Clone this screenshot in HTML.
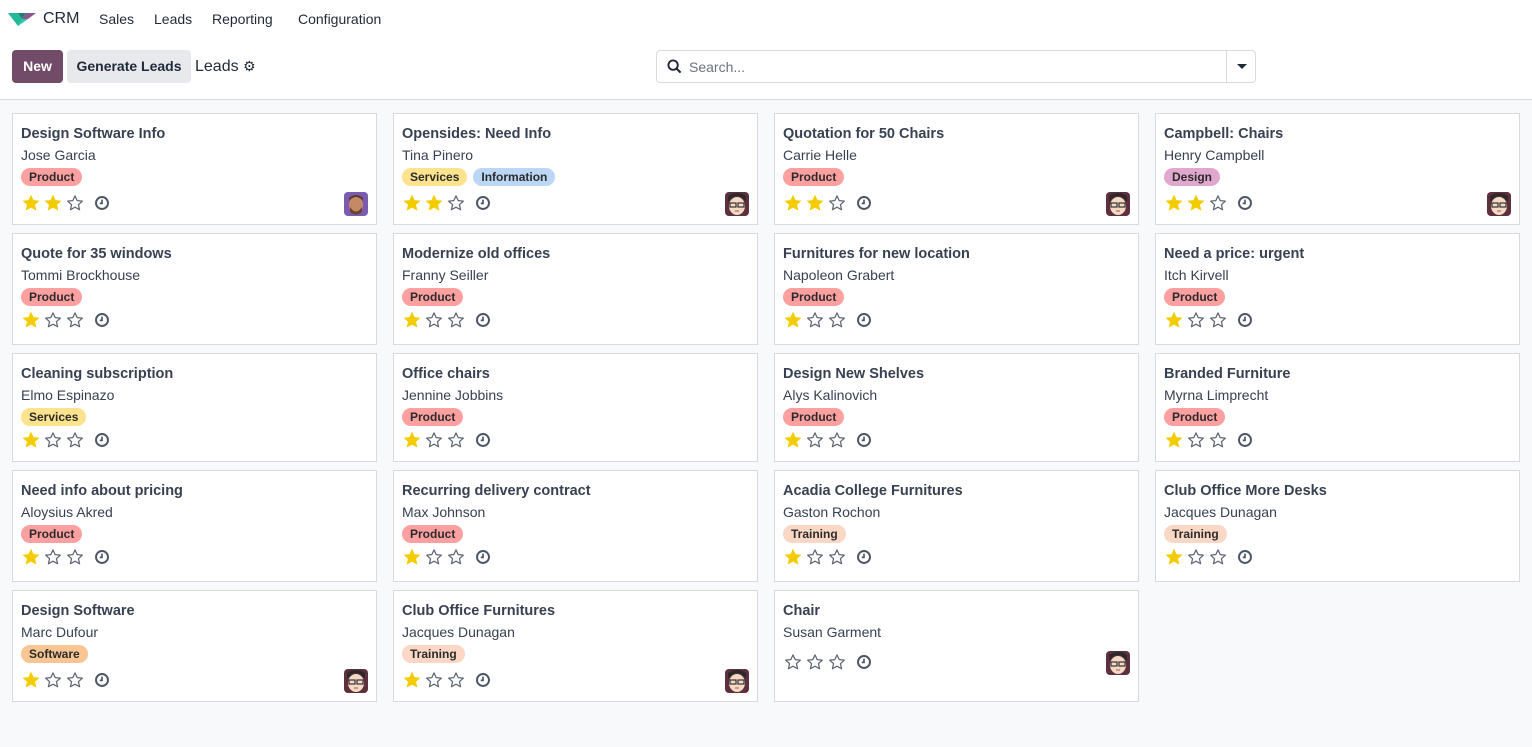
<!DOCTYPE html>
<html><head><meta charset="utf-8">
<style>
*{box-sizing:border-box;margin:0;padding:0}
body{width:1532px;height:747px;overflow:hidden;font-family:"Liberation Sans","DejaVu Sans",sans-serif;color:#374151;background:#f8f9fb;position:relative}
.top{position:absolute;left:0;top:0;width:1532px;height:100px;background:#fff;border-bottom:1px solid #d8dadd}
.nav{position:absolute;top:11px;font-size:14px;color:#1f2937}
.btn{position:absolute;top:50px;height:33px;border-radius:4px;font-size:14px;font-weight:bold;line-height:33px;text-align:center}
.search{position:absolute;left:656px;top:50px;width:600px;height:33px;border:1px solid #d8dadd;border-radius:4px;background:#fff}
.card{position:absolute;width:365px;background:#fff;border:1px solid #d8dadd}
.t{position:absolute;left:8px;font-size:14.5px;font-weight:bold;color:#374151}
.n{position:absolute;left:8px;font-size:14px;color:#374151}
.tags{position:absolute;left:8px;display:flex;gap:6px}
.tag{height:18px;line-height:18px;padding:0 8px;border-radius:9px;font-size:12px;font-weight:bold;color:#2b2b2b}
.p{background:#ffa0a0}.s{background:#fde38d}.i{background:#bcd6f5}.d{background:#e0a8cf}.tr{background:#fbd8c6}.sw{background:#f9c592}
.st{position:absolute;left:8px;display:flex;align-items:center;gap:2px}
.st svg{width:20px;height:20px}
.av{position:absolute;right:8px;width:24px;height:24px;border-radius:4px;overflow:hidden}
</style></head><body>
<svg width="0" height="0" style="position:absolute"><defs>
<symbol id="sf" viewBox="0 0 24 24"><path d="M12 2l3 6.6 7.2.7-5.4 4.8 1.6 7.1L12 17.5l-6.4 3.7 1.6-7.1L1.8 9.3 9 8.6z" fill="#f3cc00"/></symbol>
<symbol id="se" viewBox="0 0 24 24"><path d="M12 3.5l2.6 5.7 6.2.6-4.7 4.2 1.4 6.1L12 17l-5.5 3.1 1.4-6.1-4.7-4.2 6.2-.6z" fill="none" stroke="#5f6672" stroke-width="1.5" stroke-linejoin="round"/></symbol>
<symbol id="ck" viewBox="0 0 24 24"><circle cx="12" cy="12" r="8" fill="none" stroke="#4b5563" stroke-width="2.6"/><path d="M12 7.5V12.5H9" fill="none" stroke="#4b5563" stroke-width="2.2"/></symbol>
<symbol id="a1" viewBox="0 0 24 24"><rect width="24" height="24" fill="#7a5bb0"/><ellipse cx="12" cy="13" rx="7" ry="9" fill="#c48a66"/><path d="M5 9q7-8 14 0v-3q-7-6-14 0z" fill="#5a3a28"/><path d="M6 15q6 9 12 0v5q-6 5-12 0z" fill="#6b4430"/></symbol>
<symbol id="a2" viewBox="0 0 24 24"><rect width="24" height="24" fill="#5e2f3d"/><ellipse cx="12" cy="14" rx="8" ry="9" fill="#f4d9c4"/><path d="M3 10q9-12 18 0v-6q-9-6-18 0z" fill="#2a2a2a"/><rect x="5" y="11" width="6" height="4" fill="none" stroke="#333" stroke-width="1.2"/><rect x="13" y="11" width="6" height="4" fill="none" stroke="#333" stroke-width="1.2"/><path d="M10 19h4" stroke="#a55" stroke-width="1"/></symbol>
</defs></svg>

<div class="top">
<svg style="position:absolute;left:8px;top:11px" width="28" height="16" viewBox="0 0 28 16"><path d="M0 2h10l4 6-4 7z" fill="#21b799"/><path d="M10 2h8l-4 6z" fill="#1a7f6e"/><path d="M14 8l4-6h10l-8 6z" fill="#8b5a8c"/><path d="M10 15l4-7 6 0z" fill="#29c8aa"/></svg>
<div class="nav" style="left:43px;font-size:16px;top:10px">CRM</div>
<div class="nav" style="left:99px">Sales</div>
<div class="nav" style="left:154px">Leads</div>
<div class="nav" style="left:212px">Reporting</div>
<div class="nav" style="left:298px">Configuration</div>
<div class="btn" style="left:12px;width:51px;background:#714b67;color:#fff">New</div>
<div class="btn" style="left:67px;width:124px;background:#e7e9ed;color:#1f2937">Generate Leads</div>
<div style="position:absolute;left:195px;top:58px;font-size:16px;color:#1f2937">Leads <span style="font-size:14px">&#9881;</span></div>
<div class="search">
<svg style="position:absolute;left:10px;top:8px" width="15" height="15" viewBox="0 0 16 16"><circle cx="6.5" cy="6.5" r="5" fill="none" stroke="#1f2937" stroke-width="2"/><path d="M10 10l4.5 4.5" stroke="#1f2937" stroke-width="2.2"/></svg>
<span style="position:absolute;left:32px;top:8px;font-size:14px;color:#6b7280">Search...</span>
<div style="position:absolute;left:569px;top:0;width:1px;height:31px;background:#d8dadd"></div>
<div style="position:absolute;left:580px;top:13px;width:0;height:0;border-left:5px solid transparent;border-right:5px solid transparent;border-top:5px solid #1f2937"></div>
</div>
</div>

<!-- Row 1 -->
<div class="card" style="left:12px;top:113px;height:112px"><div class="t" style="top:12px">Design Software Info</div><div class="n" style="top:33px">Jose Garcia</div><div class="tags" style="top:54px"><span class="tag p">Product</span></div><div class="st" style="top:79px"><svg><use href="#sf"/></svg><svg><use href="#sf"/></svg><svg><use href="#se"/></svg><svg style="margin-left:6px;width:18px"><use href="#ck"/></svg></div><svg class="av" style="top:78px"><use href="#a1"/></svg></div>
<div class="card" style="left:393px;top:113px;height:112px"><div class="t" style="top:12px">Opensides: Need Info</div><div class="n" style="top:33px">Tina Pinero</div><div class="tags" style="top:54px"><span class="tag s">Services</span><span class="tag i">Information</span></div><div class="st" style="top:79px"><svg><use href="#sf"/></svg><svg><use href="#sf"/></svg><svg><use href="#se"/></svg><svg style="margin-left:6px;width:18px"><use href="#ck"/></svg></div><svg class="av" style="top:78px"><use href="#a2"/></svg></div>
<div class="card" style="left:774px;top:113px;height:112px"><div class="t" style="top:12px">Quotation for 50 Chairs</div><div class="n" style="top:33px">Carrie Helle</div><div class="tags" style="top:54px"><span class="tag p">Product</span></div><div class="st" style="top:79px"><svg><use href="#sf"/></svg><svg><use href="#sf"/></svg><svg><use href="#se"/></svg><svg style="margin-left:6px;width:18px"><use href="#ck"/></svg></div><svg class="av" style="top:78px"><use href="#a2"/></svg></div>
<div class="card" style="left:1155px;top:113px;height:112px"><div class="t" style="top:12px">Campbell: Chairs</div><div class="n" style="top:33px">Henry Campbell</div><div class="tags" style="top:54px"><span class="tag d">Design</span></div><div class="st" style="top:79px"><svg><use href="#sf"/></svg><svg><use href="#sf"/></svg><svg><use href="#se"/></svg><svg style="margin-left:6px;width:18px"><use href="#ck"/></svg></div><svg class="av" style="top:78px"><use href="#a2"/></svg></div>

<!-- Row 2 -->
<div class="card" style="left:12px;top:233px;height:112px"><div class="t" style="top:12px">Quote for 35 windows</div><div class="n" style="top:33px">Tommi Brockhouse</div><div class="tags" style="top:54px"><span class="tag p">Product</span></div><div class="st" style="top:76px"><svg><use href="#sf"/></svg><svg><use href="#se"/></svg><svg><use href="#se"/></svg><svg style="margin-left:6px;width:18px"><use href="#ck"/></svg></div></div>
<div class="card" style="left:393px;top:233px;height:112px"><div class="t" style="top:12px">Modernize old offices</div><div class="n" style="top:33px">Franny Seiller</div><div class="tags" style="top:54px"><span class="tag p">Product</span></div><div class="st" style="top:76px"><svg><use href="#sf"/></svg><svg><use href="#se"/></svg><svg><use href="#se"/></svg><svg style="margin-left:6px;width:18px"><use href="#ck"/></svg></div></div>
<div class="card" style="left:774px;top:233px;height:112px"><div class="t" style="top:12px">Furnitures for new location</div><div class="n" style="top:33px">Napoleon Grabert</div><div class="tags" style="top:54px"><span class="tag p">Product</span></div><div class="st" style="top:76px"><svg><use href="#sf"/></svg><svg><use href="#se"/></svg><svg><use href="#se"/></svg><svg style="margin-left:6px;width:18px"><use href="#ck"/></svg></div></div>
<div class="card" style="left:1155px;top:233px;height:112px"><div class="t" style="top:12px">Need a price: urgent</div><div class="n" style="top:33px">Itch Kirvell</div><div class="tags" style="top:54px"><span class="tag p">Product</span></div><div class="st" style="top:76px"><svg><use href="#sf"/></svg><svg><use href="#se"/></svg><svg><use href="#se"/></svg><svg style="margin-left:6px;width:18px"><use href="#ck"/></svg></div></div>

<!-- Row 3 -->
<div class="card" style="left:12px;top:353px;height:109px"><div class="t" style="top:12px">Cleaning subscription</div><div class="n" style="top:33px">Elmo Espinazo</div><div class="tags" style="top:54px"><span class="tag s">Services</span></div><div class="st" style="top:76px"><svg><use href="#sf"/></svg><svg><use href="#se"/></svg><svg><use href="#se"/></svg><svg style="margin-left:6px;width:18px"><use href="#ck"/></svg></div></div>
<div class="card" style="left:393px;top:353px;height:109px"><div class="t" style="top:12px">Office chairs</div><div class="n" style="top:33px">Jennine Jobbins</div><div class="tags" style="top:54px"><span class="tag p">Product</span></div><div class="st" style="top:76px"><svg><use href="#sf"/></svg><svg><use href="#se"/></svg><svg><use href="#se"/></svg><svg style="margin-left:6px;width:18px"><use href="#ck"/></svg></div></div>
<div class="card" style="left:774px;top:353px;height:109px"><div class="t" style="top:12px">Design New Shelves</div><div class="n" style="top:33px">Alys Kalinovich</div><div class="tags" style="top:54px"><span class="tag p">Product</span></div><div class="st" style="top:76px"><svg><use href="#sf"/></svg><svg><use href="#se"/></svg><svg><use href="#se"/></svg><svg style="margin-left:6px;width:18px"><use href="#ck"/></svg></div></div>
<div class="card" style="left:1155px;top:353px;height:109px"><div class="t" style="top:12px">Branded Furniture</div><div class="n" style="top:33px">Myrna Limprecht</div><div class="tags" style="top:54px"><span class="tag p">Product</span></div><div class="st" style="top:76px"><svg><use href="#sf"/></svg><svg><use href="#se"/></svg><svg><use href="#se"/></svg><svg style="margin-left:6px;width:18px"><use href="#ck"/></svg></div></div>

<!-- Row 4 -->
<div class="card" style="left:12px;top:470px;height:112px"><div class="t" style="top:12px">Need info about pricing</div><div class="n" style="top:33px">Aloysius Akred</div><div class="tags" style="top:54px"><span class="tag p">Product</span></div><div class="st" style="top:76px"><svg><use href="#sf"/></svg><svg><use href="#se"/></svg><svg><use href="#se"/></svg><svg style="margin-left:6px;width:18px"><use href="#ck"/></svg></div></div>
<div class="card" style="left:393px;top:470px;height:112px"><div class="t" style="top:12px">Recurring delivery contract</div><div class="n" style="top:33px">Max Johnson</div><div class="tags" style="top:54px"><span class="tag p">Product</span></div><div class="st" style="top:76px"><svg><use href="#sf"/></svg><svg><use href="#se"/></svg><svg><use href="#se"/></svg><svg style="margin-left:6px;width:18px"><use href="#ck"/></svg></div></div>
<div class="card" style="left:774px;top:470px;height:112px"><div class="t" style="top:12px">Acadia College Furnitures</div><div class="n" style="top:33px">Gaston Rochon</div><div class="tags" style="top:54px"><span class="tag tr">Training</span></div><div class="st" style="top:76px"><svg><use href="#sf"/></svg><svg><use href="#se"/></svg><svg><use href="#se"/></svg><svg style="margin-left:6px;width:18px"><use href="#ck"/></svg></div></div>
<div class="card" style="left:1155px;top:470px;height:112px"><div class="t" style="top:12px">Club Office More Desks</div><div class="n" style="top:33px">Jacques Dunagan</div><div class="tags" style="top:54px"><span class="tag tr">Training</span></div><div class="st" style="top:76px"><svg><use href="#sf"/></svg><svg><use href="#se"/></svg><svg><use href="#se"/></svg><svg style="margin-left:6px;width:18px"><use href="#ck"/></svg></div></div>

<!-- Row 5 -->
<div class="card" style="left:12px;top:590px;height:112px"><div class="t" style="top:12px">Design Software</div><div class="n" style="top:33px">Marc Dufour</div><div class="tags" style="top:54px"><span class="tag sw">Software</span></div><div class="st" style="top:79px"><svg><use href="#sf"/></svg><svg><use href="#se"/></svg><svg><use href="#se"/></svg><svg style="margin-left:6px;width:18px"><use href="#ck"/></svg></div><svg class="av" style="top:78px"><use href="#a2"/></svg></div>
<div class="card" style="left:393px;top:590px;height:112px"><div class="t" style="top:12px">Club Office Furnitures</div><div class="n" style="top:33px">Jacques Dunagan</div><div class="tags" style="top:54px"><span class="tag tr">Training</span></div><div class="st" style="top:79px"><svg><use href="#sf"/></svg><svg><use href="#se"/></svg><svg><use href="#se"/></svg><svg style="margin-left:6px;width:18px"><use href="#ck"/></svg></div><svg class="av" style="top:78px"><use href="#a2"/></svg></div>
<div class="card" style="left:774px;top:590px;height:112px"><div class="t" style="top:12px">Chair</div><div class="n" style="top:33px">Susan Garment</div><div class="st" style="top:61px"><svg><use href="#se"/></svg><svg><use href="#se"/></svg><svg><use href="#se"/></svg><svg style="margin-left:6px;width:18px"><use href="#ck"/></svg></div><svg class="av" style="top:60px"><use href="#a2"/></svg></div>
</body></html>
